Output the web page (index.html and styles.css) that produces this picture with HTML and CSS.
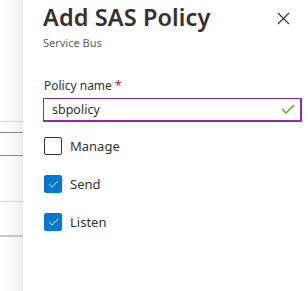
FILE: index.html
```html
<!DOCTYPE html>
<html lang="en">
<head>
    <meta charset="UTF-8">
    <meta name="viewport" content="width=device-width, initial-scale=1.0">
    <title>Add SAS Policy</title>
    <link rel="stylesheet" href="styles.css">
</head>
<body>
    <div class="page">
        <!-- blade behind the panel -->
        <div class="behind">
            <div class="row row-light" style="height: 122px"></div>
            <div class="row row-dark" style="height: 11px"></div>
            <div class="row row-dark" style="height: 23px"></div>
            <div class="row row-light" style="height: 46px"></div>
            <div class="row row-mid" style="height: 35px"></div>
        </div>

        <div class="panel">
            <div class="header">
                <div>
                    <h1 class="title">Add SAS Policy</h1>
                    <div class="subtitle">Service Bus</div>
                </div>
                <button class="close" aria-label="Close">
                    <svg width="13" height="13" viewBox="0 0 13 13">
                        <path d="M1 1 L12 12 M12 1 L1 12" stroke="#323130" stroke-width="1.1" fill="none"/>
                    </svg>
                </button>
            </div>

            <label class="field-label">Policy name <span class="req">*</span></label>
            <div class="input">
                <span class="input-text">sbpolicy</span>
                <svg class="valid" width="14" height="10" viewBox="0 0 14 10">
                    <path d="M1 5 L5 9 L13 1" stroke="#57a300" stroke-width="1.3" fill="none"/>
                </svg>
            </div>

            <div class="check">
                <span class="box"></span>
                <span class="check-label">Manage</span>
            </div>
            <div class="check">
                <span class="box checked">
                    <svg width="11" height="8" viewBox="0 0 11 8">
                        <path d="M1 4 L4 7 L10 1" stroke="#fff" stroke-width="1" fill="none"/>
                    </svg>
                </span>
                <span class="check-label">Send</span>
            </div>
            <div class="check">
                <span class="box checked">
                    <svg width="11" height="8" viewBox="0 0 11 8">
                        <path d="M1 4 L4 7 L10 1" stroke="#fff" stroke-width="1" fill="none"/>
                    </svg>
                </span>
                <span class="check-label">Listen</span>
            </div>
        </div>
    </div>
</body>
</html>
```

FILE: styles.css
```css
body {
    margin: 0;
    font-family: "Segoe UI", "Noto Sans", "Open Sans", sans-serif;
    color: #323130;
    background: #fff;
    overflow: hidden;
}

.page {
    display: flex;
    height: 291px;
}

.behind {
    width: 23px;
    flex-shrink: 0;
    background: linear-gradient(to right, #fff 0%, #f7f7f7 60%, #ececec 100%);
}

.row {
    box-sizing: border-box;
}

.row-light {
    border-bottom: 1px solid #d6d6d6;
}

.row-dark {
    border-bottom: 1px solid #8a8886;
}

.row-mid {
    border-bottom: 2px solid #c8c6c4;
}

.panel {
    flex: 1;
    padding: 0 6px 0 20px;
    background: #fff;
}

.header {
    display: flex;
    justify-content: space-between;
    align-items: flex-start;
    height: 75px;
}

.title {
    margin: 0;
    padding-top: 2px;
    font-size: 23.5px;
    font-weight: 600;
    line-height: 30px;
    letter-spacing: 0.1px;
}

.subtitle {
    font-size: 11px;
    color: #605e5c;
    line-height: 16px;
    margin-top: 3px;
}

.close {
    border: none;
    background: none;
    padding: 0;
    margin: 12px 12px 0 0;
    width: 13px;
    height: 13px;
    display: flex;
}

.field-label {
    display: block;
    font-size: 12px;
    line-height: 18px;
    margin-left: 1px;
    margin-top: 2px;
}

.req {
    color: #a4262c;
}

.input {
    box-sizing: border-box;
    height: 24px;
    margin-top: 3px;
    border: 1px solid #8a2ba6;
    border-bottom-width: 2px;
    border-right-width: 2px;
    display: flex;
    align-items: center;
    justify-content: space-between;
    padding: 0 5px 0 8px;
}

.input-text {
    font-size: 12.5px;
    line-height: 18px;
}

.valid {
    margin-bottom: 1px;
}

.check {
    display: flex;
    align-items: center;
    gap: 8px;
    margin-top: 15px;
    margin-left: 1px;
}

.check + .check {
    margin-top: 20px;
}

.box {
    box-sizing: border-box;
    width: 18px;
    height: 18px;
    border: 1px solid #323130;
    border-radius: 2px;
    display: flex;
    align-items: center;
    justify-content: center;
}

.box.checked {
    background: #0078d4;
    border-color: #0078d4;
}

.check-label {
    font-size: 13px;
    line-height: 18px;
}
```
